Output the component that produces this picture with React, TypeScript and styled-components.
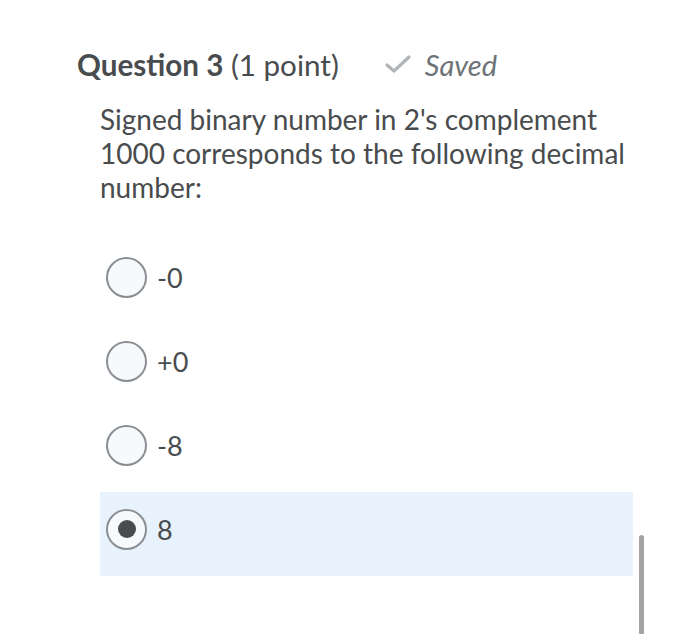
import styled, { createGlobalStyle } from 'styled-components';

const GlobalStyle = createGlobalStyle`
    body {
        margin: 0;
        background: #ffffff;
        font-family: Lato, "Open Sans", sans-serif;
        color: #494c4e;
    }
`;

const Page = styled.div`
    position: relative;
    width: 700px;
    height: 634px;
    overflow: hidden;
    padding: 44px 0 0 77px;
    box-sizing: border-box;
`;

const Header = styled.div`
    display: flex;
    align-items: center;
    gap: 46px;
    height: 40px;
`;

const Title = styled.h2`
    margin: 0;
    font-size: 29.6px;
    font-weight: 400;
    white-space: nowrap;
    color: #494c4e;
    b {
        font-weight: 700;
    }
`;

const SavedTag = styled.span`
    display: flex;
    align-items: center;
    gap: 14px;
    font-size: 29px;
    font-style: italic;
    color: #6e7376;
`;

const Prompt = styled.p`
    margin: 18px 0 0 23px;
    width: 532px;
    font-size: 28px;
    line-height: 34px;
`;

const Options = styled.div`
    margin: 36px 0 0 23px;
    width: 533px;
    display: flex;
    flex-direction: column;
`;

const Option = styled.label<{ selected?: boolean }>`
    display: flex;
    align-items: center;
    gap: 10px;
    height: 84px;
    padding: 0 6px 10px;
    box-sizing: border-box;
    background: ${props => (props.selected ? '#e8f2fc' : 'transparent')};
    font-size: 27px;
`;

const Radio = styled.span<{ checked?: boolean }>`
    width: 37px;
    height: 37px;
    border-radius: 50%;
    border: 2px solid #8a8f93;
    background: #f8f9fd;
    display: flex;
    align-items: center;
    justify-content: center;
    flex-shrink: 0;
    &::after {
        content: '';
        display: ${props => (props.checked ? 'block' : 'none')};
        width: 18px;
        height: 18px;
        border-radius: 50%;
        background: #494c4e;
    }
`;

const ScrollThumb = styled.div`
    position: absolute;
    left: 639px;
    top: 535px;
    width: 5px;
    height: 100px;
    border-radius: 3px;
    background: #a4a4a4;
`;

const CheckIcon = () => (
    <svg width="26" height="20" viewBox="0 0 26 20">
        <path d="M2 11 L9 17 L24 3" fill="none" stroke="#b1b5b8" strokeWidth="3.2" strokeLinecap="round" strokeLinejoin="round" />
    </svg>
);

const answers = ['-0', '+0', '-8', '8'];

export default function App() {
    return (
        <>
            <GlobalStyle />
            <Page>
                <Header>
                    <Title>
                        <b>Question 3</b> (1 point)
                    </Title>
                    <SavedTag>
                        <CheckIcon />
                        Saved
                    </SavedTag>
                </Header>
                <Prompt>
                    Signed binary number in 2's complement 1000 corresponds to the following decimal number:
                </Prompt>
                <Options>
                    {answers.map(a => (
                        <Option key={a} selected={a === '8'}>
                            <Radio checked={a === '8'} />
                            {a}
                        </Option>
                    ))}
                </Options>
                <ScrollThumb />
            </Page>
        </>
    );
}
